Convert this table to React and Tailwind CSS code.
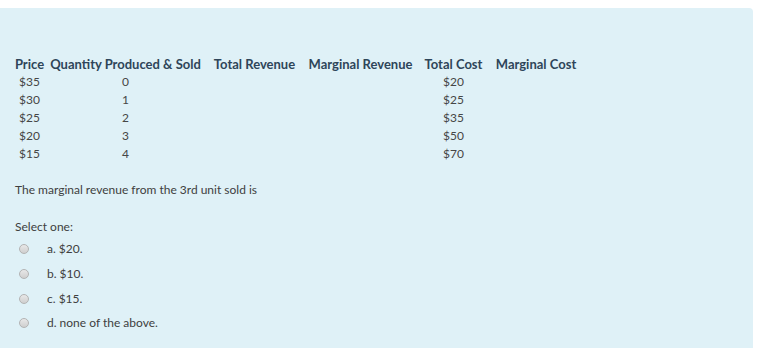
import React from "react";

const cols = ["w-[29px]", "w-[163px]", "w-[95px]", "w-[117px]", "w-[69px]", "w-[96px]"];
const headers = ["Price", "Quantity Produced & Sold", "Total Revenue", "Marginal Revenue", "Total Cost", "Marginal Cost"];
const rows = [
  ["$35", "0", "", "", "$20", ""],
  ["$30", "1", "", "", "$25", ""],
  ["$25", "2", "", "", "$35", ""],
  ["$20", "3", "", "", "$50", ""],
  ["$15", "4", "", "", "$70", ""],
];
const options = ["a. $20.", "b. $10.", "c. $15.", "d. none of the above."];

export default function App() {
  return (
    <div className="w-[764px] h-[348px] bg-white pt-[8px] font-['Lato','Open_Sans',sans-serif]">
      <div className="w-[753px] h-[340px] bg-[#dff1f7] rounded-tr-[4px] pl-[15px] pt-[49px] text-[12px] text-[#3b3b3b]">
        <div className="flex h-[16px] items-center font-bold text-[13px] text-[#2e4559] whitespace-nowrap">
          {headers.map((h, i) => (
            <div key={i} className={`${cols[i]} shrink-0 flex justify-center`}>{h}</div>
          ))}
        </div>
        {rows.map((r, ri) => (
          <div key={ri} className="flex h-[18px] items-center text-[#464646]">
            {r.map((c, i) => (
              <div key={i} className={`${cols[i]} shrink-0 text-center`}>{c}</div>
            ))}
          </div>
        ))}
        <div className="mt-[19px] h-[16px] flex items-center text-[#404040]">The marginal revenue from the 3rd unit sold is</div>
        <div className="mt-[21px] h-[16px] flex items-center text-[#404040]">Select one:</div>
        <div className="mt-[2px] flex flex-col">
          {options.map((o, i) => (
            <div key={i} className="h-[24.7px] flex items-center">
              <span className="ml-[4px] w-[10px] h-[10px] rounded-full border border-[#b3b3b3] bg-gradient-to-b from-[#e8e8e8] to-[#cfcfcf] shrink-0" />
              <span className="ml-[18px] text-[#404040]">{o}</span>
            </div>
          ))}
        </div>
      </div>
    </div>
  );
}
